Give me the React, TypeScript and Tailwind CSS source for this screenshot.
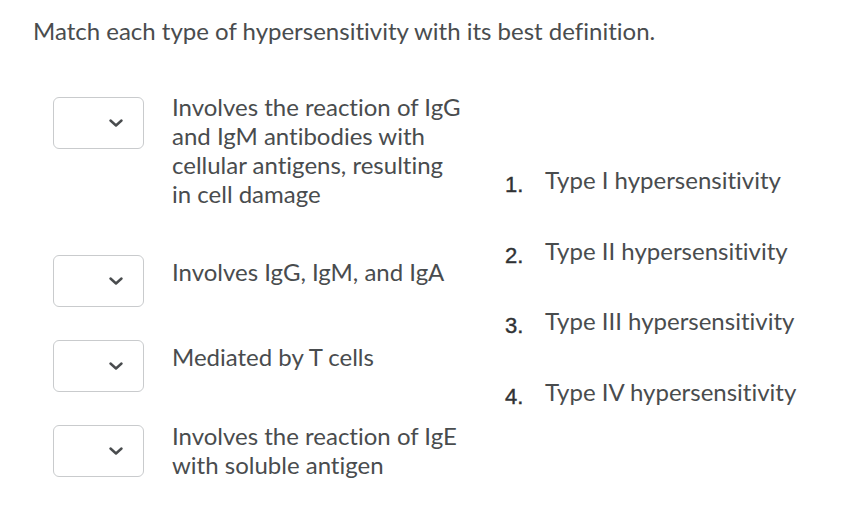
const prompts = [
  {
    text: "Involves the reaction of IgG and IgM antibodies with cellular antigens, resulting in cell damage",
    rowClass: "mt-[47px]",
    selectClass: "mt-[5px]",
    textClass: "mt-0",
  },
  {
    text: "Involves IgG, IgM, and IgA",
    rowClass: "mt-[47px]",
    selectClass: "mt-0",
    textClass: "mt-[2px]",
  },
  {
    text: "Mediated by T cells",
    rowClass: "mt-[33px]",
    selectClass: "mt-0",
    textClass: "mt-[2px]",
  },
  {
    text: "Involves the reaction of IgE with soluble antigen",
    rowClass: "mt-[29px]",
    selectClass: "mt-[4px]",
    textClass: "mt-0",
  },
];

const answers = [
  "Type I hypersensitivity",
  "Type II hypersensitivity",
  "Type III hypersensitivity",
  "Type IV hypersensitivity",
];

function Chevron() {
  return (
    <svg width="14" height="8" viewBox="0 0 14 8" fill="none">
      <path
        d="M1.5 1.5 L7 6.5 L12.5 1.5"
        stroke="#494c4e"
        strokeWidth="2.4"
        strokeLinecap="round"
        strokeLinejoin="round"
      />
    </svg>
  );
}

function Dropdown({ className }: { className: string }) {
  return (
    <div
      className={`flex h-[52px] w-[91px] shrink-0 items-center justify-end rounded-[6px] border border-[#c9cbcd] bg-white pr-[20px] ${className}`}
    >
      <Chevron />
    </div>
  );
}

export default function App() {
  return (
    <div className="h-[517px] w-[842px] bg-white font-['Lato',sans-serif] text-[#494c4e] [font-variant-ligatures:none]">
      <h1 className="pl-[33px] pt-[16px] text-[24px] leading-[29px]">
        Match each type of hypersensitivity with its best definition.
      </h1>

      <div className="flex">
        <div className="w-[505px] pl-[53px]">
          {prompts.map((p) => (
            <div key={p.text} className={`flex gap-[28px] ${p.rowClass}`}>
              <Dropdown className={p.selectClass} />
              <p className={`w-[296px] text-[24px] leading-[29px] ${p.textClass}`}>
                {p.text}
              </p>
            </div>
          ))}
        </div>

        <ol className="mt-[120px] flex flex-col gap-[36.7px]">
          {answers.map((a, i) => (
            <li key={a} className="flex items-start text-[24px] leading-[29px]">
              <span className="mt-[5px] w-[40px] font-['Liberation_Sans',sans-serif] text-[22px] text-[#303234] [-webkit-text-stroke:0.4px_#303234]">
                {i + 1}.
              </span>
              <span>{a}</span>
            </li>
          ))}
        </ol>
      </div>
    </div>
  );
}
